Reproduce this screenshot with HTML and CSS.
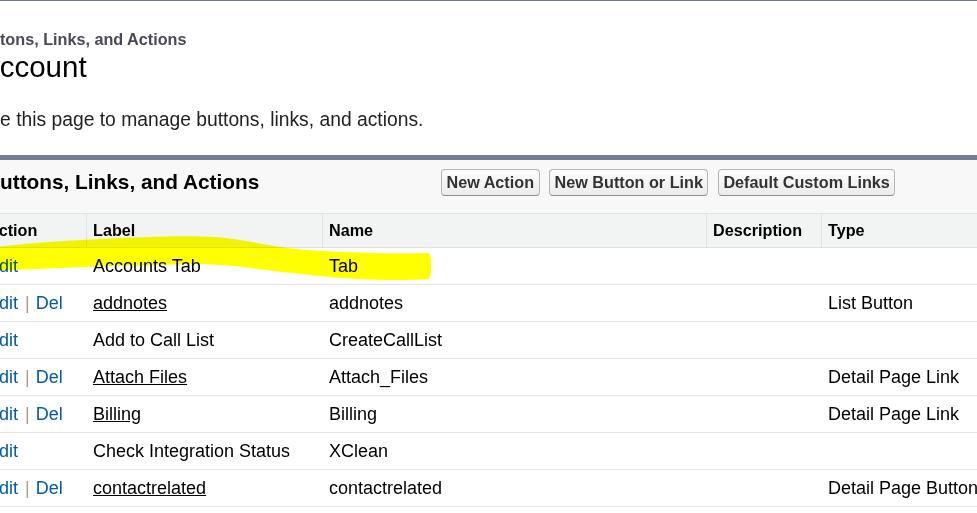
FILE: index.html
```html
<!DOCTYPE html>
<html lang="en">
<head>
<meta charset="utf-8">
<title>Buttons, Links, and Actions - Account</title>
<link rel="stylesheet" href="styles.css">
</head>
<body>
<div class="topline"></div>
<div class="page">
  <div class="crumb">Buttons, Links, and Actions</div>
  <h1 class="title">Account</h1>
  <p class="desc">Use this page to manage buttons, links, and actions.</p>

  <div class="section">
    <div class="sec-head">
      <h2 class="sec-title">Buttons, Links, and Actions</h2>
      <div class="btns">
        <button class="btn">New Action</button>
        <button class="btn">New Button or Link</button>
        <button class="btn">Default Custom Links</button>
      </div>
    </div>
    <table class="list">
      <colgroup>
        <col class="c-action">
        <col class="c-label">
        <col class="c-name">
        <col class="c-desc">
        <col class="c-type">
      </colgroup>
      <thead>
        <tr>
          <th class="first">Action</th>
          <th>Label</th>
          <th>Name</th>
          <th>Description</th>
          <th>Type</th>
        </tr>
      </thead>
      <tbody>
        <tr>
          <td><a class="act">Edit</a></td>
          <td>Accounts Tab</td>
          <td>Tab</td>
          <td></td>
          <td></td>
        </tr>
        <tr>
          <td><a class="act">Edit</a><span class="sep">|</span><a class="act">Del</a></td>
          <td><a class="lbl">addnotes</a></td>
          <td>addnotes</td>
          <td></td>
          <td>List Button</td>
        </tr>
        <tr>
          <td><a class="act">Edit</a></td>
          <td>Add to Call List</td>
          <td>CreateCallList</td>
          <td></td>
          <td></td>
        </tr>
        <tr>
          <td><a class="act">Edit</a><span class="sep">|</span><a class="act">Del</a></td>
          <td><a class="lbl">Attach Files</a></td>
          <td>Attach_Files</td>
          <td></td>
          <td>Detail Page Link</td>
        </tr>
        <tr>
          <td><a class="act">Edit</a><span class="sep">|</span><a class="act">Del</a></td>
          <td><a class="lbl">Billing</a></td>
          <td>Billing</td>
          <td></td>
          <td>Detail Page Link</td>
        </tr>
        <tr>
          <td><a class="act">Edit</a></td>
          <td>Check Integration Status</td>
          <td>XClean</td>
          <td></td>
          <td></td>
        </tr>
        <tr>
          <td><a class="act">Edit</a><span class="sep">|</span><a class="act">Del</a></td>
          <td><a class="lbl">contactrelated</a></td>
          <td>contactrelated</td>
          <td></td>
          <td>Detail Page Button</td>
        </tr>
      </tbody>
    </table>
  </div>
</div>

<svg class="highlight" width="977" height="513" viewBox="0 0 977 513" aria-hidden="true">
  <path d="M-5,247 C30,243 60,241 100,239 C140,237 190,235 215,237 C240,239 265,245 295,249 C330,252 380,254 429,253 L431,258 L431,272 L429,279 C400,281 360,280 330,277 C300,274 275,271 250,268 C230,265 210,264 190,264 C150,265 100,266 60,268 C35,269 15,270 -5,270 Z" fill="#ffff00"/>
</svg>
</body>
</html>
```

FILE: styles.css
```css
html, body {
  margin: 0;
  padding: 0;
  overflow: hidden;
  background: #fff;
}

body {
  width: 977px;
  height: 513px;
  position: relative;
  font-family: "Liberation Sans", Arial, sans-serif;
  color: #000;
}

.topline {
  height: 1px;
  background: #6f7b94;
}

.page {
  margin-left: -22px;
}

.crumb {
  margin: 29px 0 0 -5px;
  font-size: 16.2px;
  line-height: 19px;
  font-weight: bold;
  color: #4a4a56;
}

.title {
  margin: 0 0 0 2px;
  font-size: 29.5px;
  line-height: 35px;
  font-weight: normal;
  color: #000;
}

.desc {
  margin: 25px 0 0 -1.5px;
  font-size: 19.3px;
  line-height: 22px;
  color: #222;
}

.section {
  margin: 24px 0 0 2px;
  width: 1141px;
  border-top: 5px solid #747e96;
  background: #f8f8f8;
}

.sec-head {
  display: flex;
  align-items: center;
  padding: 9px 0 17px 6px;
}

.sec-title {
  flex: none;
  width: 455px;
  margin: 0 0 2px -1px;
  font-size: 20.8px;
  line-height: 24px;
  font-weight: bold;
  color: #000;
}

.btns {
  display: flex;
  gap: 9.5px;
  margin-left: 1px;
}

.btn {
  height: 27px;
  box-sizing: border-box;
  margin: 0;
  padding: 0 4.5px;
  border: 1px solid #b5b5b5;
  border-bottom-color: #8d8d8d;
  border-radius: 4px;
  background: linear-gradient(#fdfdfd, #ebebeb);
  font-family: "Liberation Sans", Arial, sans-serif;
  font-size: 16.2px;
  line-height: 25px;
  font-weight: bold;
  color: #333;
}

.list {
  width: 1141px;
  table-layout: fixed;
  border-collapse: separate;
  border-spacing: 0;
  background: #fff;
}

.c-action { width: 106px; }
.c-label { width: 236px; }
.c-name { width: 384px; }
.c-desc { width: 115px; }
.c-type { width: 300px; }

.list th {
  padding: 0 7px;
  background: #f2f3f3;
  border-top: 1px solid #e0e3e5;
  border-bottom: 1px solid #e0e3e5;
  box-shadow: inset 1px 0 0 #e0e3e5;
  text-align: left;
  font-size: 16.2px;
  line-height: 33px;
  font-weight: bold;
  color: #000;
  white-space: nowrap;
}

.list th.first {
  box-shadow: none;
}

.list td {
  padding: 0 7px;
  border-bottom: 1px solid #e6e6e6;
  font-size: 18px;
  line-height: 36px;
  color: #000;
  white-space: nowrap;
  overflow: visible;
}

.act {
  color: #015ba7;
  text-decoration: none;
}

.sep {
  display: inline-block;
  margin: 0 6px 0 7px;
  color: #b59a85;
}

.lbl {
  color: #000;
  text-decoration: underline;
}

.highlight {
  position: absolute;
  left: 0;
  top: 0;
  pointer-events: none;
  mix-blend-mode: multiply;
}
```
